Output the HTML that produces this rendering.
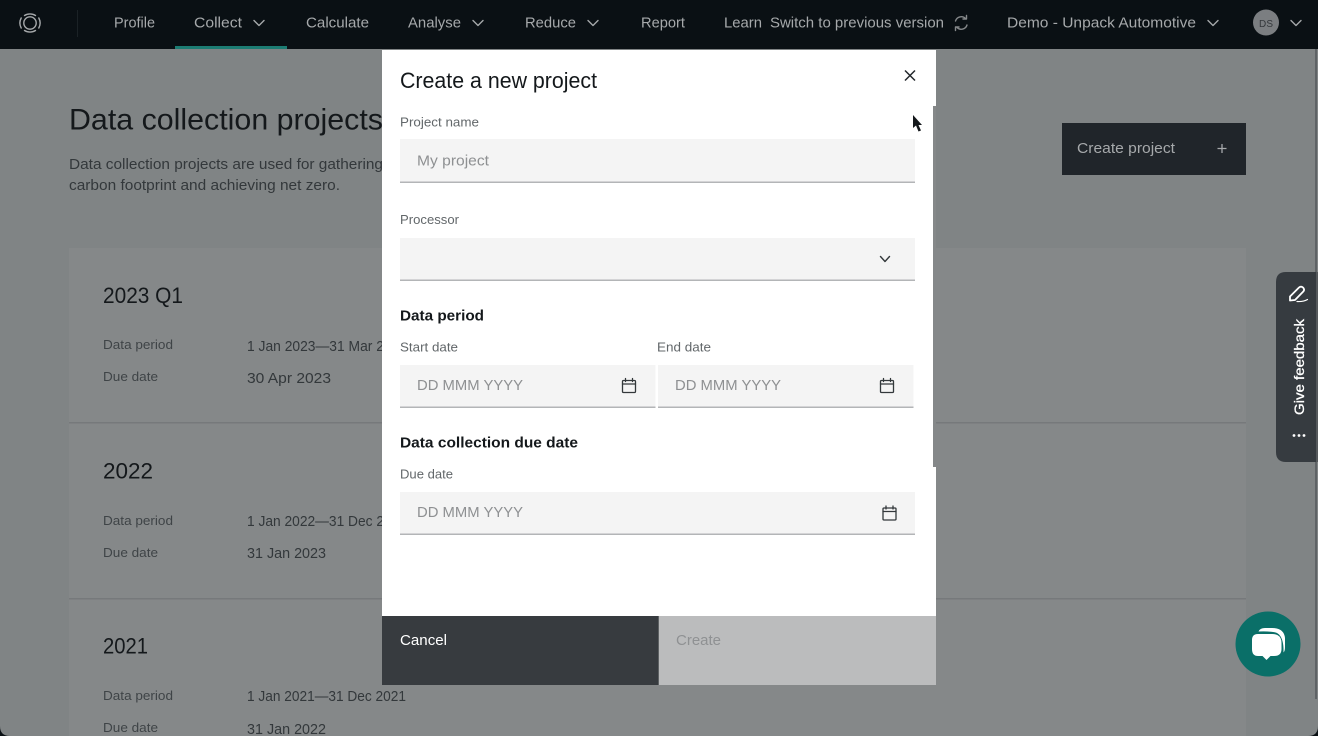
<!DOCTYPE html>
<html lang="en">
<head>
<meta charset="utf-8">
<title>Create a new project</title>
<style>
html,body{margin:0;padding:0;background:#0a1014;width:1318px;height:736px;overflow:hidden}
svg{display:block;position:absolute;left:0;top:0}
text{font-family:"Liberation Sans",sans-serif}
.nav{font-size:15px;fill:#a6a9ab}
.lab{font-size:13px;fill:#3f4447}
.val{font-size:15px;fill:#33383b}
.yr{font-size:22px;fill:#14181b}
.ml{font-size:13px;fill:#62676a}
.ph{font-size:15px;fill:#8e9092}
.h{font-size:15px;font-weight:bold;fill:#14181b}
.ic{fill:none;stroke:#a6a9ab;stroke-width:1.4;stroke-linecap:round;stroke-linejoin:round}
.cal{fill:none;stroke:#33383b;stroke-width:1.3;stroke-linecap:round;stroke-linejoin:round}
</style>
</head>
<body>
<svg width="1318" height="736" viewBox="0 0 1318 736" xmlns="http://www.w3.org/2000/svg">
<defs>
<clipPath id="page"><path d="M0 0H1318V726Q1318 736 1308 736H10Q0 736 0 726Z"/></clipPath>
<g id="calico"><rect x="-6.5" y="-5" width="13" height="12" rx="1"/><path d="M-6.5 -1.5H6.500M-3.500 -7V-4M3.500 -7V-4"/></g>
</defs>
<rect width="1318" height="736" fill="#0a1014"/>
<g clip-path="url(#page)">
<rect x="0" y="49" width="1318" height="687" fill="#808485"/>
<rect x="69" y="248" width="1177" height="488" fill="#858889"/>
<rect x="69" y="422" width="1177" height="1.500" fill="#76797b"/>
<rect x="69" y="598" width="1177" height="1.500" fill="#76797b"/>
<rect x="1315" y="49" width="2" height="650" fill="#5f6366"/>
</g>

<!-- nav -->
<rect x="0" y="0" width="1318" height="49" fill="#0a1014"/>
<g class="ic" stroke-width="1.500">
<circle cx="30" cy="23" r="6.200"/>
<path d="M24.500 15.500A10.500 10.500 0 0 1 35.500 15.500M21.200 18A10.500 10.500 0 0 0 21.200 28M38.800 18A10.500 10.500 0 0 1 38.800 28M24.500 30.500A10.500 10.500 0 0 0 35.500 30.500"/>
</g>
<rect x="77" y="10" width="1" height="27" fill="#1b2226"/>
<text class="nav" x="114" y="27.500" textLength="41" lengthAdjust="spacingAndGlyphs">Profile</text>
<text class="nav" x="194" y="27.500" textLength="48" lengthAdjust="spacingAndGlyphs">Collect</text>
<text class="nav" x="306" y="27.500" textLength="63" lengthAdjust="spacingAndGlyphs">Calculate</text>
<text class="nav" x="408" y="27.500" textLength="53" lengthAdjust="spacingAndGlyphs">Analyse</text>
<text class="nav" x="525" y="27.500" textLength="51" lengthAdjust="spacingAndGlyphs">Reduce</text>
<text class="nav" x="641" y="27.500" textLength="44" lengthAdjust="spacingAndGlyphs">Report</text>
<text class="nav" x="724" y="27.500" textLength="38" lengthAdjust="spacingAndGlyphs">Learn</text>
<text class="nav" x="770" y="27.500" textLength="174" lengthAdjust="spacingAndGlyphs">Switch to previous version</text>
<text class="nav" x="1007" y="27.500" textLength="189" lengthAdjust="spacingAndGlyphs">Demo - Unpack Automotive</text>
<g class="ic">
<path d="M254 20.500L259 25.500L264 20.500"/>
<path d="M473 20.500L478 25.500L483 20.500"/>
<path d="M588 20.500L593 25.500L598 20.500"/>
<path d="M1208 20.500L1213 25.500L1218 20.500"/>
<path d="M1291 20.500L1296 25.500L1301 20.500"/>
<g style="stroke:#85888a">
<path d="M955.500 21A6 6 0 0 1 965.500 18.500M967 25A6 6 0 0 1 957 27.500"/>
<path d="M966.500 15.500V19H963M955.500 30.500V27H959"/>
</g>
</g>
<rect x="175" y="46" width="112" height="3" fill="#1c7c73"/>
<circle cx="1266" cy="22.500" r="13" fill="#7b7e81"/>
<text x="1259" y="27" font-size="10" fill="#34383b" textLength="14">DS</text>

<!-- page content -->
<text x="69" y="129.500" font-size="30" fill="#14181b" textLength="314" lengthAdjust="spacingAndGlyphs">Data collection projects</text>
<text class="val" x="69" y="169" textLength="314" lengthAdjust="spacingAndGlyphs">Data collection projects are used for gathering</text>
<text class="val" x="69" y="190" textLength="271" lengthAdjust="spacingAndGlyphs">carbon footprint and achieving net zero.</text>
<rect x="1062" y="123" width="184" height="52" fill="#20252a"/>
<text class="nav" x="1077" y="153" textLength="98" lengthAdjust="spacingAndGlyphs">Create project</text>
<path d="M1222 144V153M1217.500 148.500H1226.500" stroke="#a6a9ab" stroke-width="1.300" fill="none"/>

<text class="yr" x="103" y="303" textLength="80" lengthAdjust="spacingAndGlyphs">2023 Q1</text>
<text class="lab" x="103" y="349" textLength="70" lengthAdjust="spacingAndGlyphs">Data period</text>
<text class="val" x="247" y="351" textLength="160" lengthAdjust="spacingAndGlyphs">1 Jan 2023—31 Mar 2023</text>
<text class="lab" x="103" y="381" textLength="55" lengthAdjust="spacingAndGlyphs">Due date</text>
<text class="val" x="247" y="383" textLength="84" lengthAdjust="spacingAndGlyphs">30 Apr 2023</text>

<text class="yr" x="103" y="478.500" textLength="50" lengthAdjust="spacingAndGlyphs">2022</text>
<text class="lab" x="103" y="525" textLength="70" lengthAdjust="spacingAndGlyphs">Data period</text>
<text class="val" x="247" y="526" textLength="160" lengthAdjust="spacingAndGlyphs">1 Jan 2022—31 Dec 2022</text>
<text class="lab" x="103" y="557" textLength="55" lengthAdjust="spacingAndGlyphs">Due date</text>
<text class="val" x="247" y="558" textLength="79" lengthAdjust="spacingAndGlyphs">31 Jan 2023</text>

<text class="yr" x="103" y="653.500" textLength="45" lengthAdjust="spacingAndGlyphs">2021</text>
<text class="lab" x="103" y="700" textLength="70" lengthAdjust="spacingAndGlyphs">Data period</text>
<text class="val" x="247" y="701" textLength="159" lengthAdjust="spacingAndGlyphs">1 Jan 2021—31 Dec 2021</text>
<text class="lab" x="103" y="732" textLength="55" lengthAdjust="spacingAndGlyphs">Due date</text>
<text class="val" x="247" y="734" textLength="79" lengthAdjust="spacingAndGlyphs">31 Jan 2022</text>

<!-- modal -->
<rect x="382" y="50" width="554" height="566" fill="#ffffff"/>
<rect x="933" y="106" width="3" height="361" fill="#858889"/>
<text x="400" y="88" font-size="22" fill="#14181b" textLength="197" lengthAdjust="spacingAndGlyphs">Create a new project</text>
<path d="M905 70.500L915 80.500M915 70.500L905 80.500" stroke="#22272b" stroke-width="1.500" fill="none"/>
<path d="M913 115V128L916 125.500L918.500 131.500L921 130.500L918.500 125H922Z" fill="#14181b"/>

<text class="ml" x="400" y="126.500" textLength="79" lengthAdjust="spacingAndGlyphs">Project name</text>
<rect x="400" y="139" width="515" height="44" fill="#f4f4f4"/>
<rect x="400" y="181.500" width="515" height="1.500" fill="#b3b5b7"/>
<text class="ph" x="417" y="165.500" textLength="72" lengthAdjust="spacingAndGlyphs">My project</text>

<text class="ml" x="400" y="224" textLength="59" lengthAdjust="spacingAndGlyphs">Processor</text>
<rect x="400" y="238" width="515" height="43" fill="#f4f4f4"/>
<rect x="400" y="279.500" width="515" height="1.500" fill="#b3b5b7"/>
<path d="M880.500 256.500L885 261.500L889.500 256.500" stroke="#33383b" stroke-width="1.400" fill="none" stroke-linecap="round" stroke-linejoin="round"/>

<text class="h" x="400" y="320.500" textLength="84" lengthAdjust="spacingAndGlyphs">Data period</text>
<text class="ml" x="400" y="351.500" textLength="58" lengthAdjust="spacingAndGlyphs">Start date</text>
<text class="ml" x="657" y="351.500" textLength="54" lengthAdjust="spacingAndGlyphs">End date</text>
<rect x="400" y="365" width="255.500" height="43" fill="#f4f4f4"/>
<rect x="400" y="406.500" width="255.500" height="1.500" fill="#b3b5b7"/>
<rect x="658" y="365" width="255.500" height="43" fill="#f4f4f4"/>
<rect x="658" y="406.500" width="255.500" height="1.500" fill="#b3b5b7"/>
<text class="ph" x="417" y="390" textLength="106" lengthAdjust="spacingAndGlyphs">DD MMM YYYY</text>
<text class="ph" x="675" y="390" textLength="106" lengthAdjust="spacingAndGlyphs">DD MMM YYYY</text>
<use href="#calico" class="cal" x="629" y="385.500"/>
<use href="#calico" class="cal" x="887" y="385.500"/>

<text class="h" x="400" y="447.500" textLength="178" lengthAdjust="spacingAndGlyphs">Data collection due date</text>
<text class="ml" x="400" y="478.500" textLength="53" lengthAdjust="spacingAndGlyphs">Due date</text>
<rect x="400" y="492" width="515" height="43" fill="#f4f4f4"/>
<rect x="400" y="533.500" width="515" height="1.500" fill="#b3b5b7"/>
<text class="ph" x="417" y="517" textLength="106" lengthAdjust="spacingAndGlyphs">DD MMM YYYY</text>
<use href="#calico" class="cal" x="889.500" y="513"/>

<rect x="382" y="616" width="276.500" height="69" fill="#373b3f"/>
<rect x="659" y="616" width="277" height="69" fill="#bbbcbd"/>
<text x="400" y="645" font-size="15" fill="#ffffff" textLength="47" lengthAdjust="spacingAndGlyphs">Cancel</text>
<text x="676" y="645" font-size="15" fill="#8f9193" textLength="45" lengthAdjust="spacingAndGlyphs">Create</text>

<!-- feedback tab -->
<path d="M1318 272H1286Q1276 272 1276 282V452Q1276 462 1286 462H1318Z" fill="#363b40"/>
<rect x="1316" y="272" width="2" height="190" fill="#55595c"/>
<g fill="none" stroke="#ffffff" stroke-width="1.800" stroke-linecap="round" stroke-linejoin="round">
<path d="M1290 296.500L1299 287.500Q1301 285.800 1303 287.500Q1305 289.500 1303.300 291.500L1295 300L1290 300.500Z"/>
<path d="M1297 301.500Q1303 302 1307.500 299.500" stroke-width="1.200"/>
</g>
<text transform="translate(1304 415) rotate(-90)" font-size="14" fill="#ffffff" stroke="#ffffff" stroke-width="0.300" textLength="96" lengthAdjust="spacingAndGlyphs">Give feedback</text>
<circle cx="1294" cy="435.500" r="1.400" fill="#fff"/><circle cx="1299" cy="435.500" r="1.400" fill="#fff"/><circle cx="1304" cy="435.500" r="1.400" fill="#fff"/>

<!-- chat -->
<circle cx="1268" cy="644" r="32.500" fill="#0a6f68"/>
<path d="M1258.500 631.500Q1260 628 1265 628H1272Q1284 628 1285 638V647Q1285 651 1283.500 652.500Q1284 637 1277 633Q1272 631 1258.500 631.500Z" fill="#fff"/>
<path d="M1258 634H1272Q1281.500 634 1281.500 643V649Q1281.500 656 1274 656H1270.500L1266.500 660L1262.500 656H1258Q1252 656 1252 649V640Q1252 634 1258 634Z" fill="#fff"/>
</svg>
</body>
</html>
